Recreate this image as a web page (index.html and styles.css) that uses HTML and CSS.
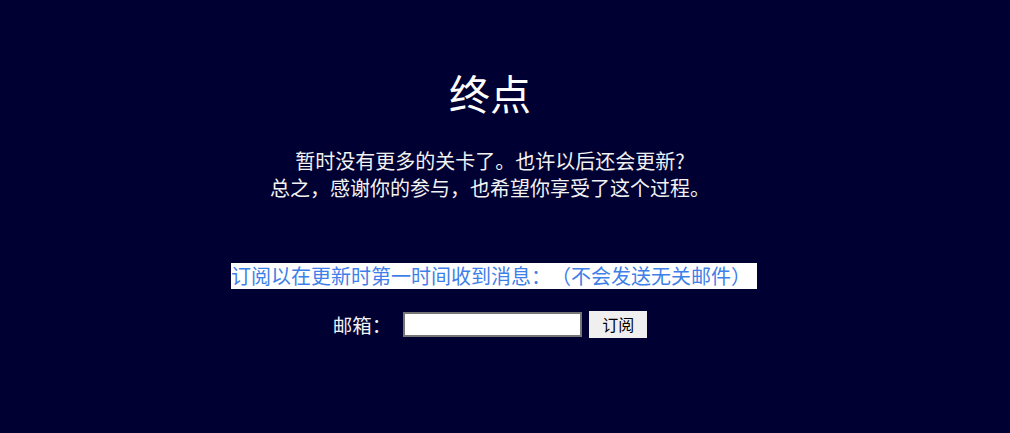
FILE: index.html
```html
<!DOCTYPE html>
<html lang="zh-CN">
<head>
<meta charset="utf-8">
<title>终点</title>
<link rel="stylesheet" href="styles.css">
</head>
<body>
<div class="page">
  <h1 class="title">终点</h1>
  <p class="message">暂时没有更多的关卡了。也许以后还会更新?<br>总之，感谢你的参与，也希望你享受了这个过程。</p>
  <div class="subscribe">
    <div class="notice-row"><span class="notice">订阅以在更新时第一时间收到消息：（不会发送无关邮件）</span></div>
    <form class="form-row">
      <label class="email-label">邮箱：</label>
      <input class="email-input" type="text">
      <button class="submit-btn" type="button">订阅</button>
    </form>
  </div>
</div>
</body>
</html>
```

FILE: styles.css
```css
html, body {
  margin: 0;
  padding: 0;
  background: #000033;
  height: 100%;
}
.page {
  width: 980px;
  text-align: center;
  font-family: "Noto Sans CJK SC", "Noto Sans", sans-serif;
  color: #f2f2f2;
  padding-top: 65px;
  text-spacing-trim: space-all;
}
.title {
  margin: 0;
  font-size: 41px;
  font-weight: 400;
  line-height: 54px;
  color: #ffffff;
}
.message {
  margin: 28px 0 0;
  font-size: 20px;
  line-height: 27px;
}
.subscribe {
  margin-top: 62px;
}
.notice-row {
  height: 26px;
  line-height: 26px;
}
.notice {
  display: inline-block;
  vertical-align: top;
  background: #ffffff;
  color: #3f80e8;
  font-size: 20px;
  line-height: 26px;
  height: 26px;
  padding-left: 0;
  padding-right: 6px;
  margin-left: 8px;
}
.form-row {
  margin: 21px 0 0;
  display: flex;
  justify-content: center;
  align-items: center;
}
.email-label {
  font-size: 19.5px;
  margin-right: 12px;
}
.email-input {
  width: 175px;
  height: 21px;
  box-sizing: content-box;
  padding: 0;
  border: 2px solid #767676;
  background: #fff;
  margin: 0 7px 0 0;
}
.submit-btn {
  width: 58px;
  height: 27px;
  border: none;
  background: #efefef;
  color: #000;
  font-family: "Noto Sans CJK SC", sans-serif;
  font-size: 16px;
  padding: 0;
  line-height: 27px;
}
```
